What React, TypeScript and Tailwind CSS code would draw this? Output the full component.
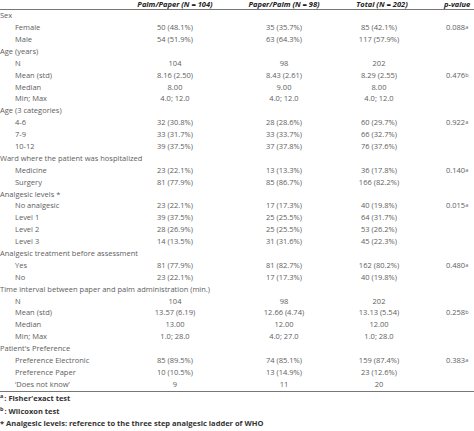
import React from "react";

type Row = { label: string; indent?: boolean; a?: string; b?: string; t?: string; p?: string; sup?: string };

const rows: Row[] = [
  { label: "Sex" },
  { label: "Female", indent: true, a: "50 (48.1%)", b: "35 (35.7%)", t: "85 (42.1%)", p: "0.088", sup: "a" },
  { label: "Male", indent: true, a: "54 (51.9%)", b: "63 (64.3%)", t: "117 (57.9%)" },
  { label: "Age (years)" },
  { label: "N", indent: true, a: "104", b: "98", t: "202" },
  { label: "Mean (std)", indent: true, a: "8.16 (2.50)", b: "8.43 (2.61)", t: "8.29 (2.55)", p: "0.476", sup: "b" },
  { label: "Median", indent: true, a: "8.00", b: "9.00", t: "8.00" },
  { label: "Min; Max", indent: true, a: "4.0; 12.0", b: "4.0; 12.0", t: "4.0; 12.0" },
  { label: "Age (3 categories)" },
  { label: "4-6", indent: true, a: "32 (30.8%)", b: "28 (28.6%)", t: "60 (29.7%)", p: "0.922", sup: "a" },
  { label: "7-9", indent: true, a: "33 (31.7%)", b: "33 (33.7%)", t: "66 (32.7%)" },
  { label: "10-12", indent: true, a: "39 (37.5%)", b: "37 (37.8%)", t: "76 (37.6%)" },
  { label: "Ward where the patient was hospitalized" },
  { label: "Medicine", indent: true, a: "23 (22.1%)", b: "13 (13.3%)", t: "36 (17.8%)", p: "0.140", sup: "a" },
  { label: "Surgery", indent: true, a: "81 (77.9%)", b: "85 (86.7%)", t: "166 (82.2%)" },
  { label: "Analgesic levels *" },
  { label: "No analgesic", indent: true, a: "23 (22.1%)", b: "17 (17.3%)", t: "40 (19.8%)", p: "0.015", sup: "a" },
  { label: "Level 1", indent: true, a: "39 (37.5%)", b: "25 (25.5%)", t: "64 (31.7%)" },
  { label: "Level 2", indent: true, a: "28 (26.9%)", b: "25 (25.5%)", t: "53 (26.2%)" },
  { label: "Level 3", indent: true, a: "14 (13.5%)", b: "31 (31.6%)", t: "45 (22.3%)" },
  { label: "Analgesic treatment before assessment" },
  { label: "Yes", indent: true, a: "81 (77.9%)", b: "81 (82.7%)", t: "162 (80.2%)", p: "0.480", sup: "a" },
  { label: "No", indent: true, a: "23 (22.1%)", b: "17 (17.3%)", t: "40 (19.8%)" },
  { label: "Time interval between paper and palm administration (min.)" },
  { label: "N", indent: true, a: "104", b: "98", t: "202" },
  { label: "Mean (std)", indent: true, a: "13.57 (6.19)", b: "12.66 (4.74)", t: "13.13 (5.54)", p: "0.258", sup: "b" },
  { label: "Median", indent: true, a: "13.00", b: "12.00", t: "12.00" },
  { label: "Min; Max", indent: true, a: "1.0; 28.0", b: "4.0; 27.0", t: "1.0; 28.0" },
  { label: "Patient's Preference" },
  { label: "Preference Electronic", indent: true, a: "85 (89.5%)", b: "74 (85.1%)", t: "159 (87.4%)", p: "0.383", sup: "a" },
  { label: "Preference Paper", indent: true, a: "10 (10.5%)", b: "13 (14.9%)", t: "23 (12.6%)" },
  { label: "\u2018Does not know\u2019", indent: true, a: "9", b: "11", t: "20" },
];

export default function App() {
  return (
    <div
      className="w-[474px] h-[431px] overflow-hidden bg-white text-[#5e5e5e] text-[7.5px] leading-none"
      style={{ fontFamily: '"Open Sans", "Liberation Sans", sans-serif' }}
    >
      <div className="w-[502px]">
        <div className="grid grid-cols-[122px_106px_112px_78px_84px] h-[10px] items-center font-bold italic text-[#222] border-b-[1.5px] border-[#777]">
          <div />
          <div className="text-center">Palm/Paper (N = 104)</div>
          <div className="text-center">Paper/Palm (N = 98)</div>
          <div className="text-center pl-[6px]">Total (N = 202)</div>
          <div className="pl-[26px]">p-value</div>
        </div>
        <div className="flex flex-col">
          {rows.map((r, i) => (
            <div key={i} className="grid grid-cols-[122px_106px_112px_78px_84px] h-[11.9px] items-center whitespace-nowrap">
              <div className={r.indent ? "pl-[15px]" : ""}>{r.label}</div>
              <div className="text-center">{r.a}</div>
              <div className="text-center">{r.b}</div>
              <div className="text-center">{r.t}</div>
              <div className="pl-[28px]">
                {r.p}
                {r.sup && <sup className="text-[5.5px] relative -top-[1px]">{r.sup}</sup>}
              </div>
            </div>
          ))}
        </div>
        <div className="border-t-[1.5px] border-[#777] pt-[1px] font-bold text-[#333] flex flex-col">
          <div className="h-[12.5px] flex items-center whitespace-nowrap">
            <sup className="text-[5.5px] mr-[1px]">a</sup> : Fisher&apos;exact test
          </div>
          <div className="h-[12.5px] flex items-center whitespace-nowrap">
            <sup className="text-[5.5px] mr-[1px]">b</sup> : Wilcoxon test
          </div>
          <div className="h-[12.5px] flex items-center whitespace-nowrap">* Analgesic levels: reference to the three step analgesic ladder of WHO</div>
        </div>
      </div>
    </div>
  );
}
